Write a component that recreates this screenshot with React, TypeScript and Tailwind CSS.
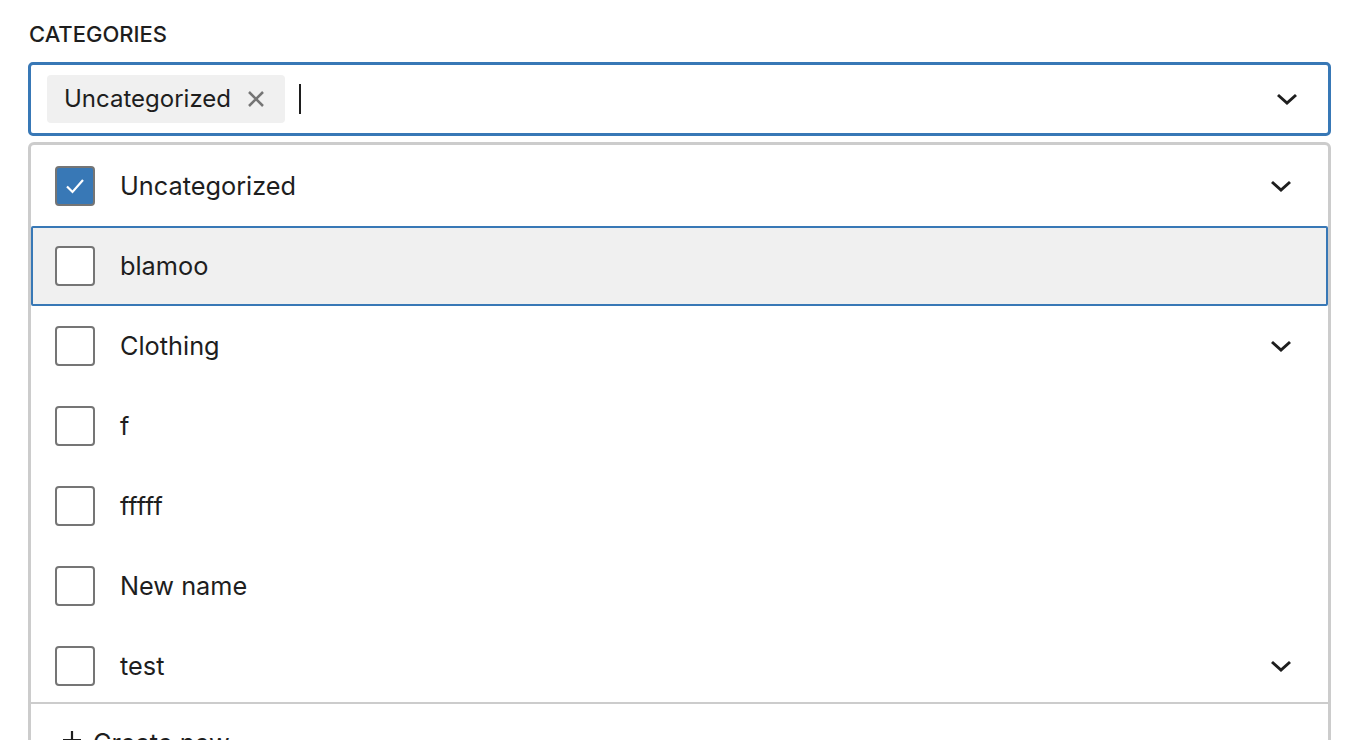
import React from "react";

const Chevron = ({ className = "" }: { className?: string }) => (
  <svg className={className} width="22" height="12" viewBox="0 0 22 12" fill="none">
    <path d="M2 2l9 8 9-8" stroke="#1e1e1e" strokeWidth="3" />
  </svg>
);

const rows = [
  { label: "Uncategorized", checked: true, chevron: true },
  { label: "blamoo", highlighted: true },
  { label: "Clothing", chevron: true },
  { label: "f" },
  { label: "fffff" },
  { label: "New name" },
  { label: "test", chevron: true },
];

export default function App() {
  return (
    <div
      className="w-[1362px] h-[740px] overflow-hidden bg-white pl-[28px] pr-[31px] pt-[21px] text-[#1e1e1e]"
      style={{ fontFamily: "Inter, 'Liberation Sans', sans-serif" }}
    >
      <div className="text-[22px] leading-[26px] font-medium pl-[1px]">CATEGORIES</div>
      <div className="mt-[15px] h-[74px] border-[3px] border-[#3878b6] rounded-[5px] flex items-center pl-[16px] pr-[30px]">
        <div className="h-[48px] bg-[#f0f0f0] rounded-[4px] flex items-center pl-[17px] pr-[20px]">
          <span className="text-[24px]">Uncategorized</span>
          <svg className="ml-[16px]" width="18" height="18" viewBox="0 0 18 18">
            <path d="M2 2l14 14M16 2L2 16" stroke="#757575" strokeWidth="2.5" />
          </svg>
        </div>
        <div className="ml-[14px] w-[2px] h-[30px] bg-[#1e1e1e]" />
        <div className="flex-1" />
        <Chevron />
      </div>
      <div className="mt-[6px] border-[3px] border-[#cccccc] rounded-t-[6px]">
        <div className="h-[559px] overflow-hidden border-b-2 border-[#cccccc] pt-[1px]">
          {rows.map((r) => (
            <div
              key={r.label}
              className={
                "h-[80px] flex items-center pl-[22px] pr-[34px] " +
                (r.highlighted ? "bg-[#f0f0f0] border-2 border-[#3878b6] rounded-[2px]" : "border-2 border-transparent")
              }
            >
              <div
                className={
                  "w-[40px] h-[40px] rounded-[4px] border-2 border-[#757575] flex items-center justify-center " +
                  (r.checked ? "bg-[#3878b6]" : "bg-white")
                }
              >
                {r.checked && (
                  <svg width="22" height="18" viewBox="0 0 22 18" fill="none">
                    <path d="M3 9.5l5.5 5.5L19 3" stroke="white" strokeWidth="2.2" />
                  </svg>
                )}
              </div>
              <span className="ml-[25px] text-[25.3px]">{r.label}</span>
              <div className="flex-1" />
              {r.chevron && <Chevron />}
            </div>
          ))}
        </div>
        <div className="h-[80px] flex items-start pl-[31px] pt-[20px]">
          <svg width="20" height="20" viewBox="0 0 20 20" className="mt-[6px]">
            <path d="M10 1v18M1 10h18" stroke="#1e1e1e" strokeWidth="2.2" />
          </svg>
          <span className="ml-[11px] text-[25.3px]">Create new</span>
        </div>
      </div>
    </div>
  );
}
